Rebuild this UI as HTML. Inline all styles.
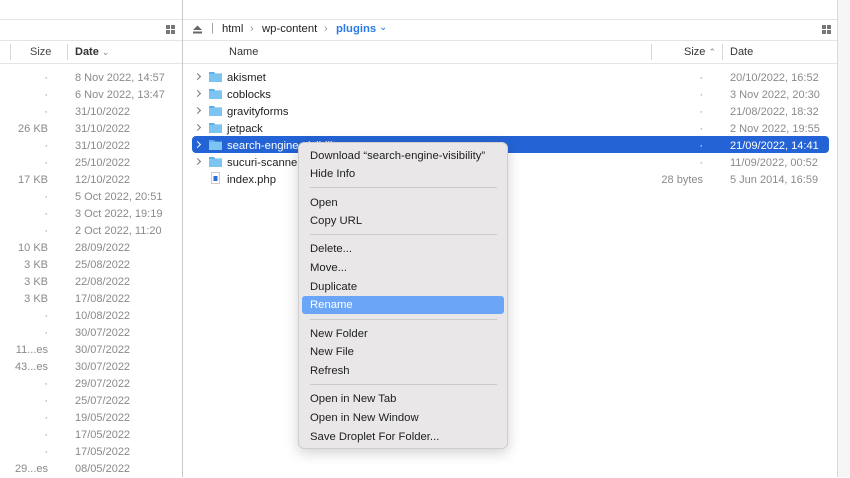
<!DOCTYPE html>
<html><head><style>
*{margin:0;padding:0;box-sizing:border-box}
body{width:850px;height:477px;overflow:hidden;background:#fff;font-family:"Liberation Sans",sans-serif;font-size:11px;color:#222;position:relative}
.a{position:absolute;white-space:nowrap}
.g{color:#8a8a8a}
.hl{position:absolute;background:#e4e4e4}
.vl{position:absolute;background:#d8d8d8;width:1px}
.fold{position:absolute;width:13px;height:11px}
.chev{position:absolute;width:5px;height:5px;border-right:1.3px solid #777;border-top:1.3px solid #777;transform:rotate(45deg)}
.menu{position:absolute;left:298px;top:142px;width:210px;height:307px;background:#e9e7e7;border:1px solid #cfcdcd;border-radius:6px;box-shadow:0 4px 14px rgba(0,0,0,.18)}
.mi{position:absolute;left:11px;font-size:11.3px;color:#1e1e1e}
.sep{position:absolute;left:11px;width:187px;height:1px;background:#cbc9c9}
</style></head><body>
<div class="hl" style="left:0;top:19px;width:850px;height:1px"></div>
<div class="hl" style="left:0;top:40px;width:838px;height:1px"></div>
<div class="hl" style="left:0;top:63px;width:838px;height:1px"></div>
<div class="vl" style="left:182px;top:0;height:477px;background:#c8c8c8"></div>
<div class="vl" style="left:837px;top:0;height:477px"></div>
<div style="position:absolute;left:838px;top:0;width:12px;height:477px;background:#f6f6f6"></div>
<div class="vl" style="left:10px;top:44px;height:16px"></div>
<div class="vl" style="left:67px;top:44px;height:16px"></div>
<div class="vl" style="left:651px;top:44px;height:16px"></div>
<div class="vl" style="left:722px;top:44px;height:16px"></div>
<svg class="a" style="left:166px;top:25px" width="9" height="9"><rect x="0" y="0" width="4" height="4" fill="#777"/><rect x="5" y="0" width="4" height="4" fill="#777"/><rect x="0" y="5" width="4" height="4" fill="#777"/><rect x="5" y="5" width="4" height="4" fill="#777"/></svg>
<svg class="a" style="left:822px;top:25px" width="9" height="9"><rect x="0" y="0" width="4" height="4" fill="#777"/><rect x="5" y="0" width="4" height="4" fill="#777"/><rect x="0" y="5" width="4" height="4" fill="#777"/><rect x="5" y="5" width="4" height="4" fill="#777"/></svg>
<svg class="a" style="left:192px;top:25px" width="11" height="9"><path d="M1 5L5.5 0.5L10 5Z" fill="#666"/><rect x="1" y="6.5" width="9" height="2" fill="#666"/></svg>
<div class="a" style="left:211px;top:22px;color:#999">|</div>
<div class="a" style="left:222px;top:23px;font-size:11.3px">html</div>
<div class="a" style="left:250px;top:23px;color:#999">›</div>
<div class="a" style="left:262px;top:23px;font-size:11.3px">wp-content</div>
<div class="a" style="left:324px;top:23px;color:#999">›</div>
<div class="a" style="left:336px;top:23px;font-size:11.3px;color:#2a7ae8;font-weight:bold">plugins</div>
<div class="a" style="left:379px;top:22px;color:#2a7ae8;font-size:10px">⌄</div>
<div class="a" style="left:30px;top:46px;color:#444">Size</div>
<div class="a" style="left:75px;top:46px;color:#333;font-weight:bold">Date <span style="color:#888;font-size:9px;font-weight:normal">⌄</span></div>
<div class="a" style="left:229px;top:46px;color:#333">Name</div>
<div class="a" style="left:684px;top:46px;color:#333">Size <span style="color:#888;font-size:9px">⌃</span></div>
<div class="a" style="left:730px;top:46px;color:#333">Date</div>
<div class="a g" style="left:0;top:70px;width:48px;text-align:right;line-height:17px">·<br>·<br>·<br>26 KB<br>·<br>·<br>17 KB<br>·<br>·<br>·<br>10 KB<br>3 KB<br>3 KB<br>3 KB<br>·<br>·<br>11...es<br>43...es<br>·<br>·<br>·<br>·<br>·<br>29...es</div>
<div class="a g" style="left:75px;top:70px;line-height:17px">8 Nov 2022, 14:57<br>6 Nov 2022, 13:47<br>31/10/2022<br>31/10/2022<br>31/10/2022<br>25/10/2022<br>12/10/2022<br>5 Oct 2022, 20:51<br>3 Oct 2022, 19:19<br>2 Oct 2022, 11:20<br>28/09/2022<br>25/08/2022<br>22/08/2022<br>17/08/2022<br>10/08/2022<br>30/07/2022<br>30/07/2022<br>30/07/2022<br>29/07/2022<br>25/07/2022<br>19/05/2022<br>17/05/2022<br>17/05/2022<br>08/05/2022</div>
<div style="position:absolute;left:192px;top:136px;width:637px;height:17px;background:#2463d5;border-radius:4px"></div>
<div class="a" style="left:227px;top:70px;line-height:17px;font-size:11.3px">akismet<br>coblocks<br>gravityforms<br>jetpack<br><span style="color:#fff">search-engine-visibility</span><br>sucuri-scanner<br>index.php</div>
<div class="a g" style="left:600px;top:70px;width:103px;text-align:right;line-height:17px">·<br>·<br>·<br>·<br><span style="color:#fff">·</span><br>·<br>28 bytes</div>
<div class="a g" style="left:730px;top:70px;line-height:17px">20/10/2022, 16:52<br>3 Nov 2022, 20:30<br>21/08/2022, 18:32<br>2 Nov 2022, 19:55<br><span style="color:#fff">21/09/2022, 14:41</span><br>11/09/2022, 00:52<br>5 Jun 2014, 16:59</div>
<div class="chev" style="left:195px;top:74px"></div>
<div class="chev" style="left:195px;top:91px"></div>
<div class="chev" style="left:195px;top:108px"></div>
<div class="chev" style="left:195px;top:125px"></div>
<div class="chev" style="left:195px;top:142px;border-color:#fff"></div>
<div class="chev" style="left:195px;top:159px"></div>
<svg class="fold" style="left:209px;top:71px"><path d="M0 1h5l1 1.5h7V11H0Z" fill="#5cb0ea"/><rect x="0" y="3" width="13" height="8" fill="#7cc4f2"/></svg>
<svg class="fold" style="left:209px;top:88px"><path d="M0 1h5l1 1.5h7V11H0Z" fill="#5cb0ea"/><rect x="0" y="3" width="13" height="8" fill="#7cc4f2"/></svg>
<svg class="fold" style="left:209px;top:105px"><path d="M0 1h5l1 1.5h7V11H0Z" fill="#5cb0ea"/><rect x="0" y="3" width="13" height="8" fill="#7cc4f2"/></svg>
<svg class="fold" style="left:209px;top:122px"><path d="M0 1h5l1 1.5h7V11H0Z" fill="#5cb0ea"/><rect x="0" y="3" width="13" height="8" fill="#7cc4f2"/></svg>
<svg class="fold" style="left:209px;top:139px"><path d="M0 1h5l1 1.5h7V11H0Z" fill="#5cb0ea"/><rect x="0" y="3" width="13" height="8" fill="#7cc4f2"/></svg>
<svg class="fold" style="left:209px;top:156px"><path d="M0 1h5l1 1.5h7V11H0Z" fill="#5cb0ea"/><rect x="0" y="3" width="13" height="8" fill="#7cc4f2"/></svg>
<svg class="a" style="left:211px;top:172px" width="9" height="12"><rect x="0.5" y="0.5" width="8" height="11" fill="#fff" stroke="#ccc"/><rect x="2.5" y="4" width="4" height="5" fill="#2a6fd6"/></svg>
<div class="menu">
<div class="mi" style="top:7px">Download “search-engine-visibility”</div>
<div class="mi" style="top:25px">Hide Info</div>
<div class="sep" style="top:44px"></div>
<div class="mi" style="top:54px">Open</div>
<div class="mi" style="top:72px">Copy URL</div>
<div class="sep" style="top:91px"></div>
<div class="mi" style="top:100px">Delete...</div>
<div class="mi" style="top:119px">Move...</div>
<div class="mi" style="top:138px">Duplicate</div>
<div style="position:absolute;left:3px;top:153px;width:202px;height:18px;background:#6aa5f7;border-radius:3px"></div>
<div class="mi" style="top:156px;color:#fff">Rename</div>
<div class="sep" style="top:176px"></div>
<div class="mi" style="top:185px">New Folder</div>
<div class="mi" style="top:203px">New File</div>
<div class="mi" style="top:222px">Refresh</div>
<div class="sep" style="top:241px"></div>
<div class="mi" style="top:250px">Open in New Tab</div>
<div class="mi" style="top:269px">Open in New Window</div>
<div class="mi" style="top:288px">Save Droplet For Folder...</div>
</div>
</body></html>
